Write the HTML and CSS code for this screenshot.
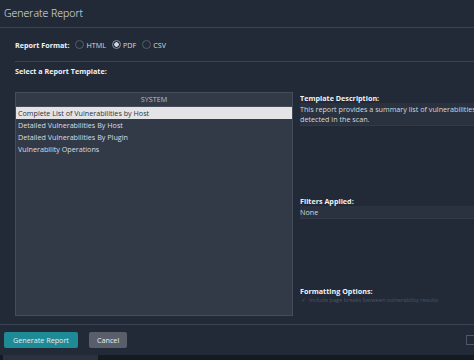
FILE: index.html
```html
<!DOCTYPE html>
<html>
<head>
  <title>Generate Report</title>
  <link rel="stylesheet" href="styles.css">
</head>
<body>
  <div class="modal">
    <div class="modal-header">Generate Report</div>

    <div class="modal-body">
      <div class="format-row">
        <span class="label">Report Format:</span>
        <label class="radio"><span class="dot"></span>HTML</label>
        <label class="radio"><span class="dot checked"></span>PDF</label>
        <label class="radio"><span class="dot"></span>CSV</label>
      </div>

      <div class="label template-label">Select a Report Template:</div>

      <div class="template-area">
        <div class="template-list">
          <div class="list-head">SYSTEM</div>
          <div class="list-item selected">Complete List of Vulnerabilities by Host</div>
          <div class="list-item">Detailed Vulnerabilities By Host</div>
          <div class="list-item">Detailed Vulnerabilities By Plugin</div>
          <div class="list-item">Vulnerability Operations</div>
        </div>

        <div class="template-info">
          <div class="info-block">
            <div class="label">Template Description:</div>
            <div class="info-box">This report provides a summary list of vulnerabilities detected in the scan.</div>
          </div>
          <div class="info-block filters">
            <div class="label">Filters Applied:</div>
            <div class="info-box">None</div>
          </div>
          <div class="info-block options">
            <div class="label">Formatting Options:</div>
            <div class="option"><span class="check">&#10003;</span>Include page breaks between vulnerability results</div>
          </div>
        </div>
      </div>
    </div>

    <div class="modal-footer">
      <button class="btn btn-primary">Generate Report</button>
      <button class="btn btn-cancel">Cancel</button>
      <span class="footer-box"></span>
    </div>
  </div>
  <div class="taskbar"><span class="task"></span></div>
</body>
</html>
```

FILE: styles.css
```css
body {
  margin: 0;
  padding: 0;
  background-color: #222a38;
  color: #e4e7ec;
  font-family: "Open Sans", sans-serif;
  overflow: hidden;
}

.modal {
  height: 355px;
  display: flex;
  flex-direction: column;
  background-color: #222a38;
}

.modal-header {
  height: 27px;
  line-height: 27px;
  padding-left: 4px;
  font-size: 10.5px;
  font-weight: 300;
  color: #e8ebf0;
  border-bottom: 1px solid #3a4352;
}

.modal-body {
  flex: 1;
  padding: 0 0 0 15px;
  display: flex;
  flex-direction: column;
}

.label {
  font-size: 7.2px;
  font-weight: 700;
  color: #f0f2f5;
}

.format-row {
  display: flex;
  align-items: center;
  height: 33px;
  border-bottom: 1px solid #3a4352;
  font-size: 7.2px;
}

.format-row .label {
  margin-right: 6px;
}

.radio {
  display: flex;
  align-items: center;
  margin-right: 6px;
  color: #d6dae1;
}

.dot {
  width: 9px;
  height: 9px;
  border: 1px solid #555d6b;
  border-radius: 50%;
  margin-right: 2px;
  box-sizing: border-box;
}

.dot.checked {
  background: radial-gradient(circle, #d0d6e0 0 2px, transparent 2.5px);
  border-color: #8a92a0;
}

.template-label {
  margin-top: 4px;
  height: 26px;
}

.template-area {
  display: flex;
  flex: 1;
  padding-bottom: 8px;
}

.template-list {
  width: 276px;
  background-color: #323a48;
  border: 1px solid #454d5b;
  font-size: 7.2px;
}

.list-head {
  text-align: center;
  color: #b9bfc9;
  height: 13px;
  line-height: 13px;
  border-bottom: 1px solid #454d5b;
}

.list-item {
  height: 12px;
  line-height: 12px;
  padding-left: 2px;
  color: #dadde2;
}

.list-item.selected {
  background-color: #e4e4e6;
  color: #2c3340;
}

.template-info {
  flex: 1;
  margin-left: 7px;
  display: flex;
  flex-direction: column;
  overflow: hidden;
  white-space: nowrap;
}

.info-block .label {
  margin-top: 1px;
}

.info-box {
  background-color: #2a3240;
  font-size: 7.2px;
  line-height: 10px;
  padding: 1px 0;
  white-space: normal;
  width: 190px;
  color: #d4d8df;
  border-bottom: 1px solid #323a48;
}

.filters {
  margin-top: 69px;
}

.options {
  margin-top: auto;
  margin-bottom: 12px;
}

.option {
  font-size: 5.6px;
  color: #4c5565;
  padding-left: 1px;
}

.check {
  margin-right: 3px;
}

.modal-footer {
  border-top: 1px solid #3a4352;
  display: flex;
  align-items: center;
  padding: 0 4px;
  height: 30px;
}

.btn {
  font-family: "Open Sans", sans-serif;
  font-size: 7.2px;
  border: none;
  border-radius: 2px;
  height: 16px;
  color: #e8ecf0;
  padding: 0 8px;
}

.btn-primary {
  background-color: #1d8a95;
  width: 74px;
}

.btn-cancel {
  background-color: #595e6a;
  margin-left: 11px;
  width: 38px;
}

.footer-box {
  margin-left: auto;
  width: 8px;
  height: 8px;
  border: 1px solid #4f5766;
  margin-right: -6px;
}

.taskbar {
  height: 5px;
  background-color: #161a22;
  padding-left: 3px;
}

.task {
  display: block;
  width: 95px;
  height: 5px;
  background-color: #2b323f;
}
```
